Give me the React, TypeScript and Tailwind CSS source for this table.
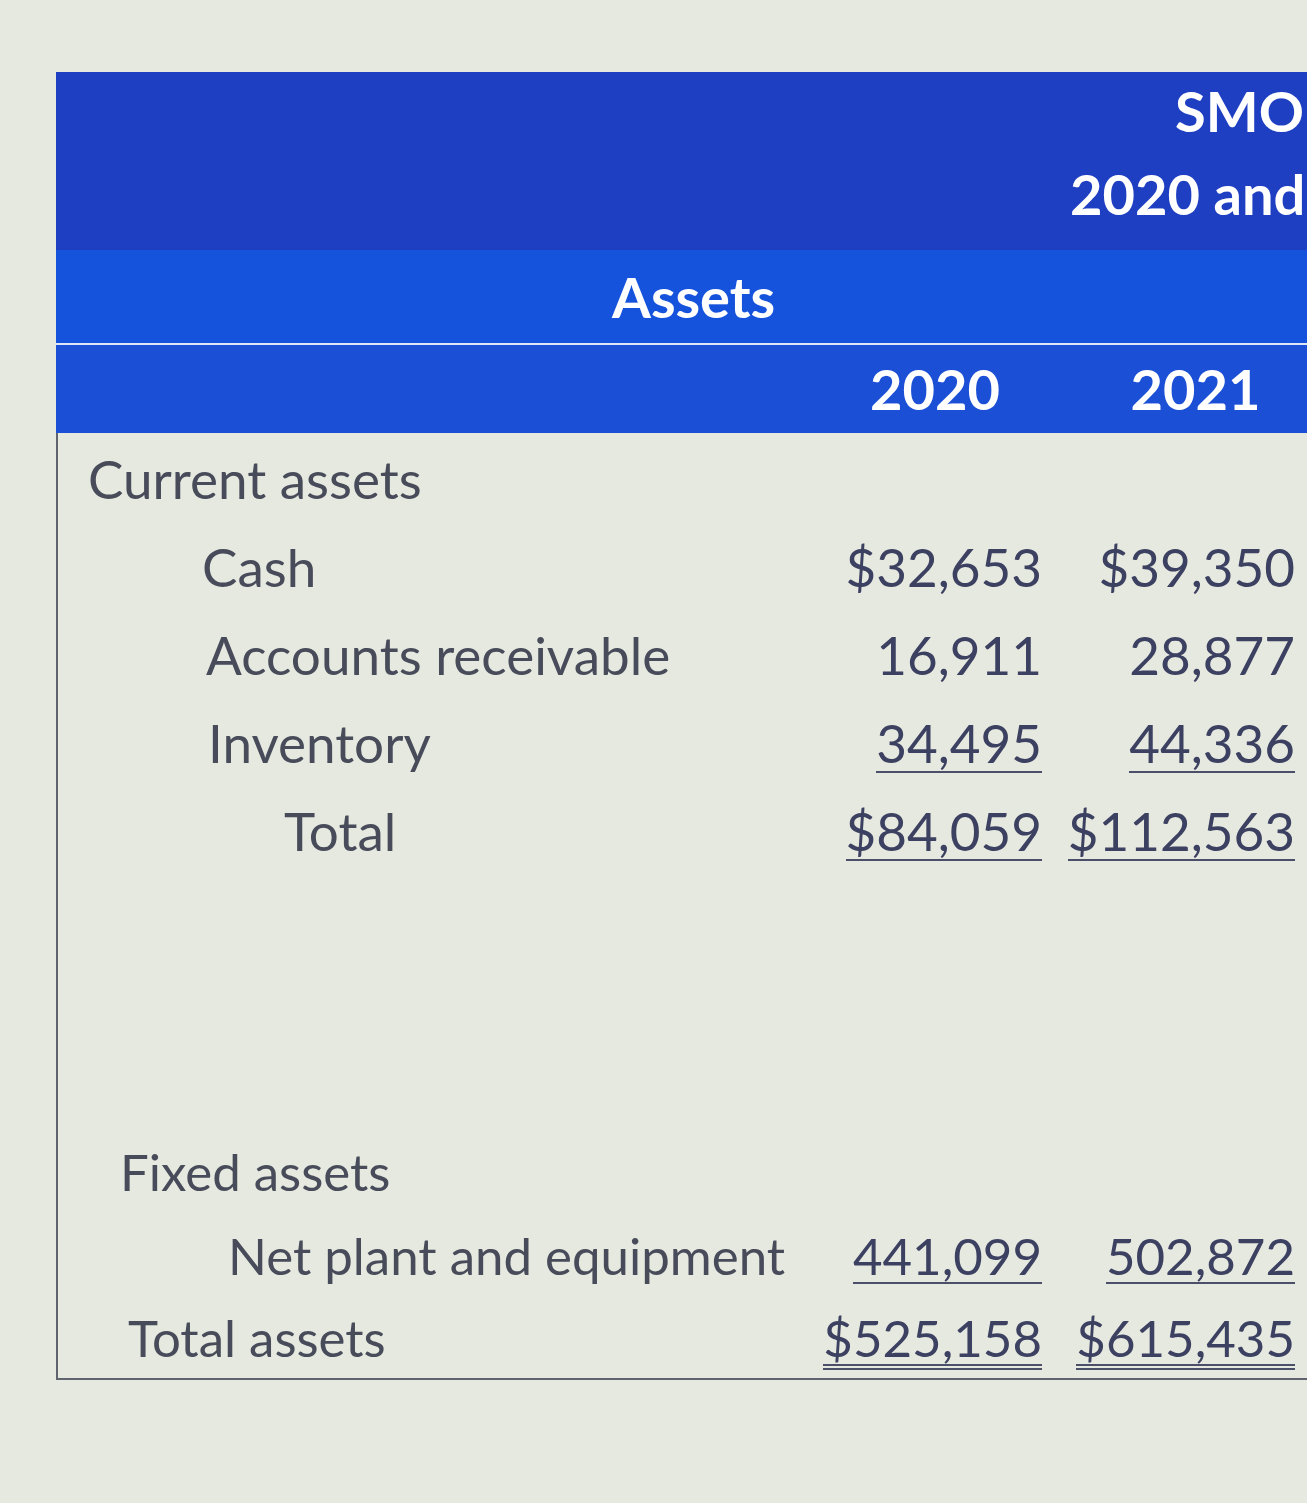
import React from "react";

const font = { fontFamily: "Lato, 'Open Sans', 'Liberation Sans', sans-serif" };

function Num({ v, line }: { v: string; line?: "single" | "double" }) {
  if (line === "double") {
    return (
      <span className="inline-block border-b-[6px] border-double border-[#4b4f6a] leading-[1.05]">{v}</span>
    );
  }
  if (line === "single") {
    return <span className="inline-block border-b-2 border-[#4b4f6a] leading-[1.05]">{v}</span>;
  }
  return <span className="inline-block leading-[1.05]">{v}</span>;
}

function Row({
  label,
  pl,
  a,
  b,
  line,
  h,
}: {
  label: string;
  pl: string;
  a?: string;
  b?: string;
  line?: "single" | "double";
  h: string;
}) {
  return (
    <div className={`flex items-center ${h}`}>
      <div className={`w-[764px] shrink-0 ${pl} text-[#484c5a]`}>{label}</div>
      <div className="w-[230px] shrink-0 text-right pr-[10px] text-[#3d4161]">
        {a && <Num v={a} line={line} />}
      </div>
      <div className="w-[257px] shrink-0 text-right pr-[14px] text-[#3d4161]">
        {b && <Num v={b} line={line} />}
      </div>
    </div>
  );
}

export default function App() {
  return (
    <div
      className="w-[1307px] h-[1503px] overflow-hidden bg-[#e6e9df] pt-[72px] pl-[56px]"
      style={font}
    >
      <div className="w-[1500px]">
        {/* Title band */}
        <div className="h-[178px] bg-[#1f3fc2] text-white font-bold text-[56px] leading-none pt-[11px] flex flex-col gap-[27px] whitespace-nowrap">
          <div className="pl-[1119px]">SMOLIRA GOLF CORP.</div>
          <div className="pl-[1014px]">2020 and 2021 Balance Sheets</div>
        </div>
        {/* Assets band */}
        <div className="h-[95px] bg-[#1653dc] text-white font-bold text-[56px] flex items-center pl-[556px] border-b-2 border-[#dfe6f7]">
          Assets
        </div>
        {/* Years band */}
        <div className="h-[88px] bg-[#1a4fd6] text-white font-bold text-[56px] flex items-center">
          <div className="w-[764px] shrink-0" />
          <div className="w-[230px] shrink-0 text-center">2020</div>
          <div className="w-[257px] shrink-0 text-center pl-[34px]">2021</div>
        </div>
        {/* Body */}
        <div className="border-l-2 border-b-2 border-[#60646f] whitespace-nowrap pt-[2px]">
          <div className="text-[53px]">
            <Row label="Current assets" pl="pl-[30px]" h="h-[88px]" />
            <Row label="Cash" pl="pl-[144px]" a="$32,653" b="$39,350" h="h-[88px]" />
            <Row label="Accounts receivable" pl="pl-[148px]" a="16,911" b="28,877" h="h-[88px]" />
            <Row label="Inventory" pl="pl-[150px]" a="34,495" b="44,336" line="single" h="h-[88px]" />
            <Row label="Total" pl="pl-[226px]" a="$84,059" b="$112,563" line="single" h="h-[88px]" />
          </div>
          <div className="h-[255px]" />
          <div className="text-[51px]">
            <Row label="Fixed assets" pl="pl-[62px]" h="h-[84px]" />
            <Row label="Net plant and equipment" pl="pl-[170px]" a="441,099" b="502,872" line="single" h="h-[84px]" />
            <Row label="Total assets" pl="pl-[70px]" a="$525,158" b="$615,435" line="double" h="h-[80px]" />
          </div>
        </div>
      </div>
    </div>
  );
}
